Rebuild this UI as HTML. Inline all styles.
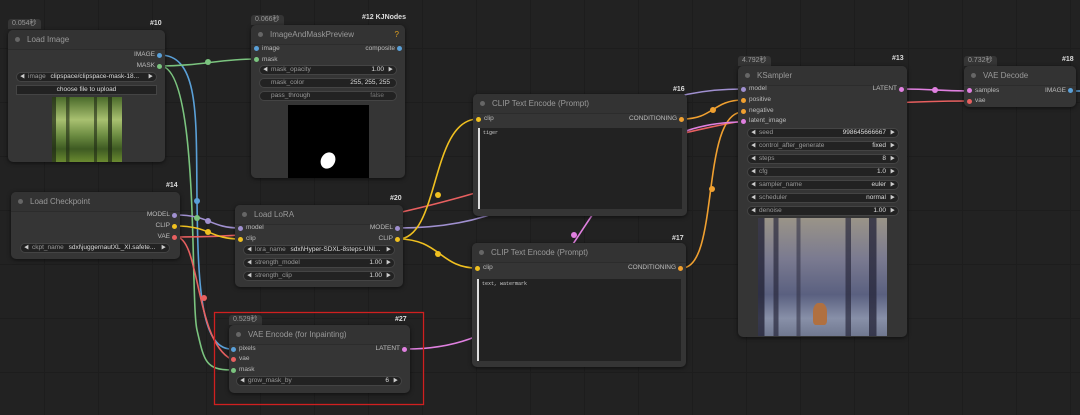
<!DOCTYPE html>
<html><head><meta charset="utf-8"><style>
*{box-sizing:border-box;margin:0;padding:0}
body{width:1080px;height:415px;overflow:hidden;background:#222;font-family:"Liberation Sans","Noto Sans CJK SC",sans-serif;position:relative;
background-image:linear-gradient(#1d1d1d 1px,transparent 1px),linear-gradient(90deg,#1d1d1d 1px,transparent 1px);background-size:54px 54px;background-position:-10px -6px}
.n{position:absolute;background:#353535;border-radius:5px;box-shadow:0 1px 4px rgba(0,0,0,.6)}
.t{position:absolute;left:0;right:0;top:0;height:20px;border-bottom:1px solid #2c2c2c;color:#999;font-size:8px;line-height:20px;padding-left:19px;border-radius:5px 5px 0 0;background:#333}
.t:before{content:"";position:absolute;left:7px;top:7px;width:5px;height:5px;border-radius:50%;background:#666}
.tab{position:absolute;background:#353535;color:#999;font-size:7px;line-height:10px;padding:0 4px;border-radius:3px 3px 0 0}
.id{position:absolute;color:#ddd;font-size:7px;font-weight:bold}
.s{position:absolute;font-size:6.5px;color:#bbb;line-height:8px;white-space:nowrap}
.d{position:absolute;width:5px;height:5px;border-radius:50%}
.w{position:absolute;height:10px;background:#222;border:1px solid #444;border-radius:5px;font-size:6.5px;color:#999;line-height:8px;padding:0 8px;white-space:nowrap;overflow:hidden}
.w b{position:absolute;right:12px;top:0;color:#ddd;font-weight:normal}
.w:before{content:"◀";position:absolute;left:3px;font-size:5px;color:#ccc}
.w:after{content:"▶";position:absolute;right:3px;font-size:5px;color:#ccc}
.w.nb:before,.w.nb:after{content:none}
.w span{margin-left:3px}
.ta{position:absolute;background:#222;border-left:2px solid #ddd;font-family:"Liberation Mono",monospace;font-size:5px;color:#ccc;padding:2px 3px}
</style></head><body>
<svg width="1080" height="415" style="position:absolute;left:0;top:0" fill="none" stroke-width="1.6">
<path d="M160 55 C200 55,196 120,197 200 S200 349,231 349" stroke="#5aa0d8"/>
<path d="M160 66 C200 66,190 300,197 330 S205 370,231 370" stroke="#7bc47f"/>
<path d="M160 66 C200 66,220 59,256 59" stroke="#7bc47f"/>
<path d="M176 237 C200 237,195 340,231 359" stroke="#e86060"/>
<path d="M176 237 C500 237,600 101,968 101" stroke="#e86060"/>
<path d="M176 215 C210 215,210 228,240 228" stroke="#a090d0"/>
<path d="M176 226 C210 226,210 239,240 239" stroke="#f0c020"/>
<path d="M398 228 C600 228,560 89,743 89" stroke="#a090d0"/>
<path d="M398 239 C440 239,430 119,478 119" stroke="#f0c020"/>
<path d="M398 239 C440 239,440 268,477 268" stroke="#f0c020"/>
<path d="M683 119 C713 119,713 100,743 100" stroke="#f0a030"/>
<path d="M682 268 C720 268,700 112,743 112" stroke="#f0a030"/>
<path d="M406 349 C600 349,560 122,743 122" stroke="#e080e0"/>
<path d="M903 89 C935 89,935 91,969 91" stroke="#e080e0"/>
<path d="M1072 91 L1080 91" stroke="#5aa0d8"/>
<g stroke="none">
<circle cx="208" cy="62" r="3" fill="#7bc47f"/><circle cx="197" cy="201" r="3" fill="#5aa0d8"/><circle cx="197" cy="218" r="3" fill="#7bc47f"/>
<circle cx="208" cy="221" r="3" fill="#a090d0"/><circle cx="208" cy="232" r="3" fill="#f0c020"/>
<circle cx="438" cy="195" r="3" fill="#f0c020"/><circle cx="438" cy="254" r="3" fill="#f0c020"/>
<circle cx="713" cy="110" r="3" fill="#f0a030"/><circle cx="712" cy="189" r="3" fill="#f0a030"/>
<circle cx="574" cy="235" r="3" fill="#e080e0"/><circle cx="935" cy="90" r="3" fill="#e080e0"/><circle cx="204" cy="298" r="3" fill="#e86060"/>
</g>
<rect x="214.5" y="312.5" width="209" height="92" stroke="#d02020" stroke-width="1.3"/>
</svg>

<!-- Load Image -->
<div class="tab" style="left:8px;top:19px">0.054秒</div><div class="id" style="left:150px;top:20px">#10</div>
<div class="n" style="left:8px;top:30px;width:157px;height:132px"><div class="t">Load Image</div>
<div class="s" style="right:10px;top:21px">IMAGE</div><div class="d" style="right:3px;top:23px;background:#5aa0d8"></div>
<div class="s" style="right:10px;top:32px">MASK</div><div class="d" style="right:3px;top:34px;background:#7bc47f"></div>
<div class="w" style="left:8px;top:42px;width:141px"><span>image</span> <span style="color:#ddd">clipspace/clipspace-mask-18...</span></div>
<div class="w nb" style="left:8px;top:55px;width:141px;border-radius:0;text-align:center;color:#ddd">choose file to upload</div>
<div style="position:absolute;left:44px;top:67px;width:70px;height:65px;background:linear-gradient(90deg,rgba(30,40,20,.7) 0 6%,transparent 6% 20%,rgba(30,40,20,.6) 20% 25%,transparent 25% 60%,rgba(30,40,20,.6) 60% 64%,transparent 64% 80%,rgba(30,40,20,.7) 80% 86%,transparent 86%),linear-gradient(180deg,#4a6a2a 0,#a8c070 35%,#6a8a40 60%,#3e5a22 80%,#6a8a30 100%)"></div>
</div>

<!-- ImageAndMaskPreview -->
<div class="tab" style="left:251px;top:15px">0.066秒</div><div class="id" style="left:362px;top:14px">#12 KJNodes</div>
<div class="n" style="left:251px;top:25px;width:154px;height:153px"><div class="t">ImageAndMaskPreview<span style="position:absolute;right:6px;color:#e0a020">?</span></div>
<div class="d" style="left:3px;top:21px;background:#5aa0d8"></div><div class="s" style="left:11px;top:20px">image</div>
<div class="s" style="right:10px;top:20px">composite</div><div class="d" style="right:3px;top:21px;background:#5aa0d8"></div>
<div class="d" style="left:3px;top:32px;background:#7bc47f"></div><div class="s" style="left:11px;top:31px">mask</div>
<div class="w" style="left:8px;top:40px;width:138px"><span>mask_opacity</span><b>1.00</b></div>
<div class="w nb" style="left:8px;top:53px;width:138px"><span>mask_color</span><b style="right:6px">255, 255, 255</b></div>
<div class="w nb" style="left:8px;top:66px;width:138px"><span>pass_through</span><b style="right:12px;color:#777">false</b></div>
<div style="position:absolute;left:37px;top:80px;width:81px;height:73px;background:#000"><div style="position:absolute;left:33px;top:47px;width:14px;height:17px;background:#fff;border-radius:50%;transform:rotate(30deg)"></div></div>
</div>

<!-- Load Checkpoint -->
<div class="id" style="left:166px;top:182px">#14</div>
<div class="n" style="left:11px;top:192px;width:169px;height:67px"><div class="t">Load Checkpoint</div>
<div class="s" style="right:10px;top:19px">MODEL</div><div class="d" style="right:3px;top:21px;background:#a090d0"></div>
<div class="s" style="right:10px;top:30px">CLIP</div><div class="d" style="right:3px;top:32px;background:#f0c020"></div>
<div class="s" style="right:10px;top:41px">VAE</div><div class="d" style="right:3px;top:43px;background:#e86060"></div>
<div class="w" style="left:9px;top:51px;width:150px"><span>ckpt_name</span> <span style="color:#ddd">sdxl\juggernautXL_XI.safete...</span></div>
</div>

<!-- Load LoRA -->
<div class="id" style="left:390px;top:195px">#20</div>
<div class="n" style="left:235px;top:205px;width:168px;height:82px"><div class="t">Load LoRA</div>
<div class="d" style="left:3px;top:21px;background:#a090d0"></div><div class="s" style="left:11px;top:19px">model</div>
<div class="s" style="right:10px;top:19px">MODEL</div><div class="d" style="right:3px;top:21px;background:#a090d0"></div>
<div class="d" style="left:3px;top:32px;background:#f0c020"></div><div class="s" style="left:11px;top:30px">clip</div>
<div class="s" style="right:10px;top:30px">CLIP</div><div class="d" style="right:3px;top:32px;background:#f0c020"></div>
<div class="w" style="left:8px;top:40px;width:152px"><span>lora_name</span> <span style="color:#ddd">sdxl\Hyper-SDXL-8steps-UNI...</span></div>
<div class="w" style="left:8px;top:53px;width:152px"><span>strength_model</span><b>1.00</b></div>
<div class="w" style="left:8px;top:66px;width:152px"><span>strength_clip</span><b>1.00</b></div>
</div>

<!-- CLIP 16 -->
<div class="id" style="left:673px;top:86px">#16</div>
<div class="n" style="left:473px;top:94px;width:214px;height:122px"><div class="t">CLIP Text Encode (Prompt)</div>
<div class="d" style="left:3px;top:23px;background:#f0c020"></div><div class="s" style="left:11px;top:21px">clip</div>
<div class="s" style="right:10px;top:21px">CONDITIONING</div><div class="d" style="right:3px;top:23px;background:#f0a030"></div>
<div class="ta" style="left:5px;top:34px;width:204px;height:81px">tiger</div>
</div>

<!-- CLIP 17 -->
<div class="id" style="left:672px;top:235px">#17</div>
<div class="n" style="left:472px;top:243px;width:214px;height:124px"><div class="t">CLIP Text Encode (Prompt)</div>
<div class="d" style="left:3px;top:23px;background:#f0c020"></div><div class="s" style="left:11px;top:21px">clip</div>
<div class="s" style="right:10px;top:21px">CONDITIONING</div><div class="d" style="right:3px;top:23px;background:#f0a030"></div>
<div class="ta" style="left:5px;top:36px;width:204px;height:82px">text, watermark</div>
</div>

<!-- VAE Encode -->
<div class="tab" style="left:229px;top:315px">0.529秒</div><div class="id" style="left:395px;top:316px">#27</div>
<div class="n" style="left:229px;top:325px;width:181px;height:68px"><div class="t">VAE Encode (for Inpainting)</div>
<div class="d" style="left:2px;top:22px;background:#5aa0d8"></div><div class="s" style="left:10px;top:20px">pixels</div>
<div class="s" style="right:10px;top:20px">LATENT</div><div class="d" style="right:3px;top:22px;background:#e080e0"></div>
<div class="d" style="left:2px;top:32px;background:#e86060"></div><div class="s" style="left:10px;top:30px">vae</div>
<div class="d" style="left:2px;top:43px;background:#7bc47f"></div><div class="s" style="left:10px;top:41px">mask</div>
<div class="w" style="left:7px;top:51px;width:166px"><span>grow_mask_by</span><b>6</b></div>
</div>

<!-- KSampler -->
<div class="tab" style="left:738px;top:56px">4.792秒</div><div class="id" style="left:892px;top:55px">#13</div>
<div class="n" style="left:738px;top:66px;width:169px;height:271px"><div class="t">KSampler</div>
<div class="d" style="left:3px;top:21px;background:#a090d0"></div><div class="s" style="left:11px;top:19px">model</div>
<div class="s" style="right:10px;top:19px">LATENT</div><div class="d" style="right:3px;top:21px;background:#e080e0"></div>
<div class="d" style="left:3px;top:32px;background:#f0a030"></div><div class="s" style="left:11px;top:30px">positive</div>
<div class="d" style="left:3px;top:43px;background:#f0a030"></div><div class="s" style="left:11px;top:41px">negative</div>
<div class="d" style="left:3px;top:53px;background:#e080e0"></div><div class="s" style="left:11px;top:51px">latent_image</div>
<div class="w" style="left:9px;top:62px;width:152px"><span>seed</span><b>998645666667</b></div>
<div class="w" style="left:9px;top:75px;width:152px"><span>control_after_generate</span><b>fixed</b></div>
<div class="w" style="left:9px;top:88px;width:152px"><span>steps</span><b>8</b></div>
<div class="w" style="left:9px;top:101px;width:152px"><span>cfg</span><b>1.0</b></div>
<div class="w" style="left:9px;top:114px;width:152px"><span>sampler_name</span><b>euler</b></div>
<div class="w" style="left:9px;top:127px;width:152px"><span>scheduler</span><b>normal</b></div>
<div class="w" style="left:9px;top:140px;width:152px"><span>denoise</span><b>1.00</b></div>
<div style="position:absolute;left:20px;top:152px;width:129px;height:118px;background:linear-gradient(90deg,rgba(35,35,55,.8) 0 5%,transparent 5% 12%,rgba(40,40,60,.7) 12% 16%,transparent 16% 30%,rgba(50,50,70,.6) 30% 33%,transparent 33% 68%,rgba(40,40,60,.7) 68% 72%,transparent 72% 86%,rgba(40,40,60,.8) 86% 92%,transparent 92%),linear-gradient(180deg,#9a9488 0,#7a7a90 35%,#5a6080 65%,#8890a8 85%,#707890 100%)"><div style="position:absolute;left:55px;top:85px;width:14px;height:22px;background:#b07040;border-radius:40% 40% 20% 20%"></div></div>
</div>

<!-- VAE Decode -->
<div class="tab" style="left:964px;top:56px">0.732秒</div><div class="id" style="left:1062px;top:56px">#18</div>
<div class="n" style="left:964px;top:66px;width:112px;height:41px"><div class="t">VAE Decode</div>
<div class="d" style="left:3px;top:22px;background:#e080e0"></div><div class="s" style="left:11px;top:21px">samples</div>
<div class="s" style="right:10px;top:21px">IMAGE</div><div class="d" style="right:3px;top:22px;background:#5aa0d8"></div>
<div class="d" style="left:3px;top:33px;background:#e86060"></div><div class="s" style="left:11px;top:31px">vae</div>
</div>
</body></html>
